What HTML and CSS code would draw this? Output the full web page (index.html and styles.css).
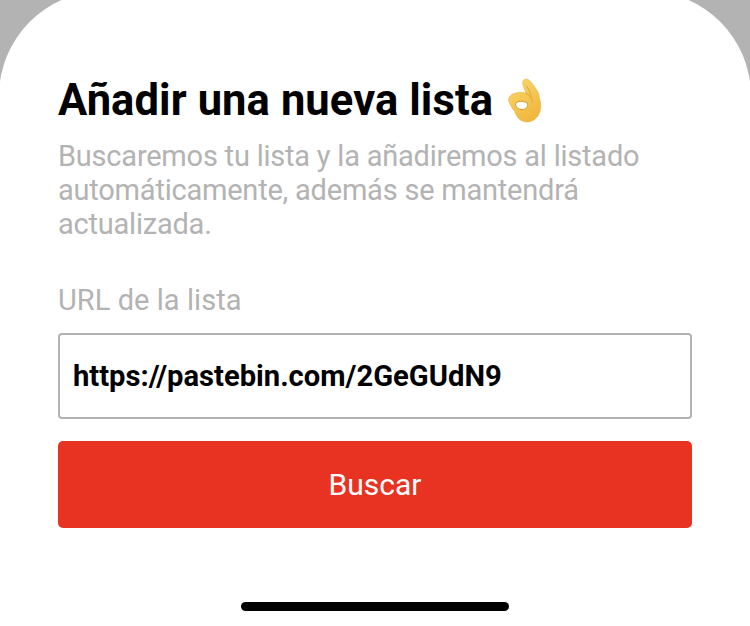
FILE: index.html
```html
<!DOCTYPE html>
<html lang="es">
<head>
<meta charset="utf-8">
<title>Añadir una nueva lista</title>
<link rel="stylesheet" href="styles.css">
</head>
<body>
<main class="sheet">
  <h1 class="title">Añadir una nueva lista
    <svg class="emoji" viewBox="0 0 150 162" aria-hidden="true">
      <defs>
        <linearGradient id="skin" x1="0.2" y1="0" x2="0.7" y2="1">
          <stop offset="0" stop-color="#f9d769"/>
          <stop offset="1" stop-color="#efb53c"/>
        </linearGradient>
      </defs>
      <path d="M84 15C92 14 104 28 112 42C120 52 124 62 124 72C130 88 130 108 122 122C112 140 92 148 76 142C62 138 54 126 50 112C44 106 36 92 32 80C30 70 38 62 50 58C62 54 74 54 84 58C80 46 74 36 74 26C74 20 78 16 84 15Z" fill="url(#skin)" stroke="#e6a834" stroke-width="1.5"/>
      <path d="M52 90C58 80 76 80 88 87C92 96 84 106 72 107C62 107 54 100 52 90Z" fill="#fff" stroke="#d9982c" stroke-width="3"/>
      <path d="M86 36C92 46 98 58 100 70M84 58C92 62 100 70 104 84" fill="none" stroke="#dd9f2e" stroke-width="2.5"/>
    </svg>
  </h1>
  <p class="intro">Buscaremos tu lista y la añadiremos al listado automáticamente, además se mantendrá actualizada.</p>
  <label class="label" for="url">URL de la lista</label>
  <div class="field" id="url">https://pastebin.com/2GeGUdN9</div>
  <button class="button" type="button">Buscar</button>
  <div class="home-bar"></div>
</main>
</body>
</html>
```

FILE: styles.css
```css
* { box-sizing: border-box; }
html, body { margin: 0; height: 626px; overflow: hidden; background: #b3b3b3; }
body { font-family: Roboto, "Noto Sans", sans-serif; }
.sheet {
  height: 635px;
  margin: -9px -1px 0;
  background: #fff;
  border-radius: 105px 105px 0 0;
  padding: 82px 59px 0;
  display: flex;
  flex-direction: column;
}
.title {
  margin: 0;
  height: 56px;
  display: flex;
  align-items: center;
  gap: 5px;
  font-size: 43.5px;
  font-weight: 700;
  line-height: 56px;
  color: #000;
  letter-spacing: 0.1px;
}
.emoji { width: 50px; height: 54px; flex: none; }
.intro {
  margin: 10px 0 0;
  font-size: 29px;
  line-height: 34px;
  color: #b3b3b3;
  letter-spacing: -0.22px;
}
.label {
  margin-top: 42px;
  font-size: 29px;
  line-height: 34px;
  color: #b3b3b3;
  letter-spacing: 0.05px;
}
.field {
  margin-top: 16px;
  height: 86px;
  border: 2px solid #b3b3b3;
  border-radius: 4px;
  padding: 0 13px;
  display: flex;
  align-items: center;
  font-size: 29.2px;
  font-weight: 700;
  color: #000;
}
.button {
  margin-top: 22px;
  height: 87px;
  border: 0;
  border-radius: 5px;
  background: #e83222;
  color: #fff;
  font: 400 30px Roboto, "Noto Sans", sans-serif;
}
.home-bar {
  margin: 74px auto 0;
  width: 268px;
  height: 9px;
  border-radius: 5px;
  background: #000;
}
```
